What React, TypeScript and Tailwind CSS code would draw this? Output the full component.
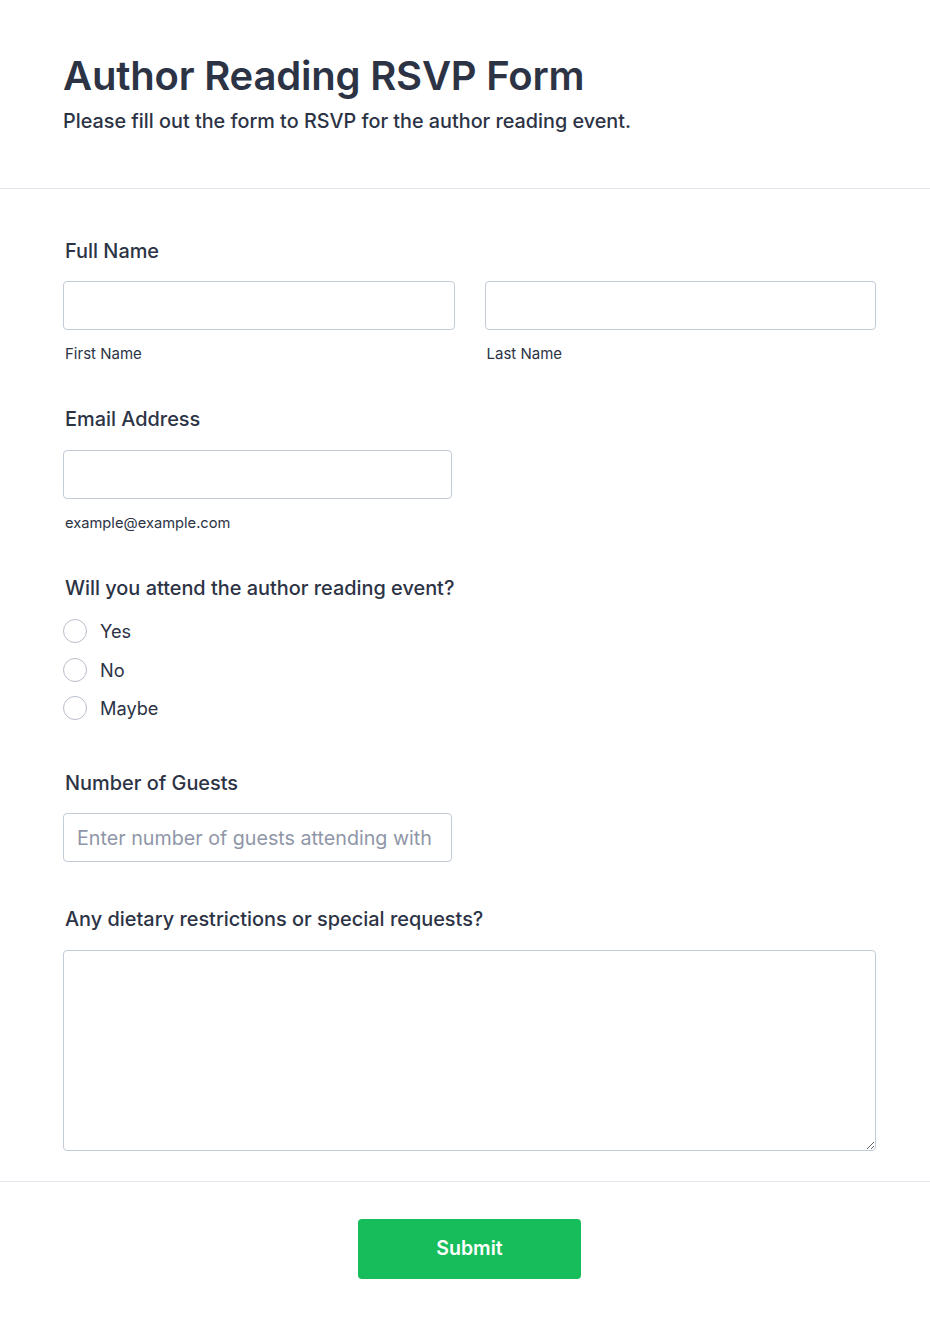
import React from "react";

function Label({ children }: { children: React.ReactNode }) {
  return (
    <div className="pl-[2px] text-[19.9px] leading-6 font-medium text-[#2c3345]">{children}</div>
  );
}

function Radio({ label }: { label: string }) {
  return (
    <label className="flex items-center h-6 gap-[13px]">
      <span className="w-6 h-6 rounded-full border border-[#b8bdc9] bg-white shrink-0" />
      <span className="text-[18.2px] leading-6 text-[#2c3345]">{label}</span>
    </label>
  );
}

export default function App() {
  return (
    <div className="min-h-[1328px] bg-white font-['Inter',sans-serif] text-[#2c3345]">
      <header className="px-[63px] pt-[52px] pb-[55px] border-b border-[#e3e5ec]">
        <h1 className="text-[40px] leading-[48px] font-semibold text-[#2c3345] tracking-[-0.2px]">
          Author Reading RSVP Form
        </h1>
        <p className="mt-[9px] text-[19.8px] leading-6 font-medium text-[#2c3345]">
          Please fill out the form to RSVP for the author reading event.
        </p>
      </header>

      <main className="pl-[63px] pr-[54px] pt-[50px] pb-[30px] border-b border-[#e3e5ec]">
        <section>
          <Label>Full Name</Label>
          <div className="mt-[18px] grid grid-cols-2 gap-[30px]">
            <div>
              <input className="block w-full h-[49px] rounded-[4px] border border-[#c3cad8] bg-white outline-none" />
              <div className="mt-[14px] pl-[2px] text-[15px] leading-5 text-[#2c3345]">First Name</div>
            </div>
            <div>
              <input className="block w-full h-[49px] rounded-[4px] border border-[#c3cad8] bg-white outline-none" />
              <div className="mt-[14px] pl-[2px] text-[15px] leading-5 text-[#2c3345]">Last Name</div>
            </div>
          </div>
        </section>

        <section className="mt-[43px]">
          <Label>Email Address</Label>
          <input className="mt-[19px] block w-[389px] h-[49px] rounded-[4px] border border-[#c3cad8] bg-white outline-none" />
          <div className="mt-[14px] pl-[2px] text-[14.7px] leading-5 text-[#2c3345]">example@example.com</div>
        </section>

        <section className="mt-[43px]">
          <Label>Will you attend the author reading event?</Label>
          <div className="mt-[19px] flex flex-col gap-[14.5px]">
            <Radio label="Yes" />
            <Radio label="No" />
            <Radio label="Maybe" />
          </div>
        </section>

        <section className="mt-[51px]">
          <Label>Number of Guests</Label>
          <input
            placeholder="Enter number of guests attending with"
            className="mt-[18px] block w-[389px] h-[49px] rounded-[4px] border border-[#c3cad8] bg-white px-[13px] text-[19.7px] text-[#2c3345] placeholder:text-[#8f96a8] outline-none"
          />
        </section>

        <section className="mt-[45px]">
          <Label>Any dietary restrictions or special requests?</Label>
          <textarea className="mt-[19px] block w-full h-[201px] rounded-[4px] border border-[#c3cad8] bg-white outline-none" />
        </section>
      </main>

      <div className="pl-[63px] pr-[54px] pt-[37px] flex justify-center">
        <button className="w-[223px] h-[60px] rounded-[4px] bg-[#18bd5b] text-white text-[19.5px] font-semibold">
          Submit
        </button>
      </div>
    </div>
  );
}
